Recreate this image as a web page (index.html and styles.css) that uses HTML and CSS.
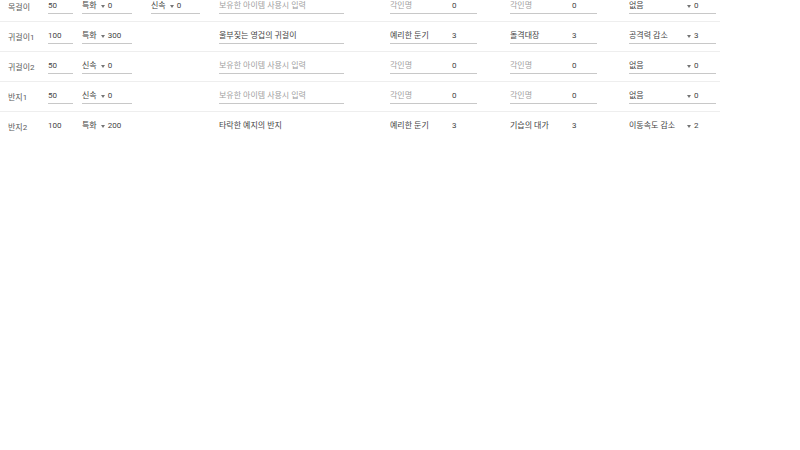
FILE: index.html
```html
<!DOCTYPE html>
<html lang="ko">
<head>
  <meta charset="UTF-8" />
  <title>장신구</title>
  <link rel="stylesheet" href="styles.css">
</head>
<body>
  <div class="list">
    <div class="row">
      <div class="label">목걸이</div>
      <div class="field qty">50</div>
      <div class="field sel"><span>특화</span><i class="arrow"></i><span>0</span></div>
      <div class="field sel sel2"><span>신속</span><i class="arrow"></i><span>0</span></div>
      <div class="field name ph">보유한 아이템 사용시 입력</div>
      <div class="field eng"><span class="en ph">각인명</span><span>0</span></div>
      <div class="field eng eng2"><span class="en ph">각인명</span><span>0</span></div>
      <div class="field pen"><span class="pn">없음</span><i class="arrow"></i><span>0</span></div>
    </div>
    <div class="row">
      <div class="label">귀걸이1</div>
      <div class="field qty">100</div>
      <div class="field sel"><span>특화</span><i class="arrow"></i><span>300</span></div>
      <div class="blank"></div>
      <div class="field name">울부짖는 영겁의 귀걸이</div>
      <div class="field eng"><span class="en">예리한 둔기</span><span>3</span></div>
      <div class="field eng eng2"><span class="en">돌격대장</span><span>3</span></div>
      <div class="field pen"><span class="pn">공격력 감소</span><i class="arrow"></i><span>3</span></div>
    </div>
    <div class="row">
      <div class="label">귀걸이2</div>
      <div class="field qty">50</div>
      <div class="field sel"><span>신속</span><i class="arrow"></i><span>0</span></div>
      <div class="blank"></div>
      <div class="field name ph">보유한 아이템 사용시 입력</div>
      <div class="field eng"><span class="en ph">각인명</span><span>0</span></div>
      <div class="field eng eng2"><span class="en ph">각인명</span><span>0</span></div>
      <div class="field pen"><span class="pn">없음</span><i class="arrow"></i><span>0</span></div>
    </div>
    <div class="row">
      <div class="label">반지1</div>
      <div class="field qty">50</div>
      <div class="field sel"><span>신속</span><i class="arrow"></i><span>0</span></div>
      <div class="blank"></div>
      <div class="field name ph">보유한 아이템 사용시 입력</div>
      <div class="field eng"><span class="en ph">각인명</span><span>0</span></div>
      <div class="field eng eng2"><span class="en ph">각인명</span><span>0</span></div>
      <div class="field pen"><span class="pn">없음</span><i class="arrow"></i><span>0</span></div>
    </div>
    <div class="row fixed">
      <div class="label">반지2</div>
      <div class="field qty">100</div>
      <div class="field sel"><span>특화</span><i class="arrow"></i><span>200</span></div>
      <div class="blank"></div>
      <div class="field name">타락한 예지의 반지</div>
      <div class="field eng"><span class="en">예리한 둔기</span><span>3</span></div>
      <div class="field eng eng2"><span class="en">기습의 대가</span><span>3</span></div>
      <div class="field pen"><span class="pn">이동속도 감소</span><i class="arrow"></i><span>2</span></div>
    </div>
  </div>
</body>
</html>
```

FILE: styles.css
```css
body {
  margin: 0;
  background: #ffffff;
  font-family: Roboto, "Noto Sans CJK KR", sans-serif;
  font-size: 8px;
  color: #444444;
}
.list {
  width: 720px;
  margin-top: -8px;
}
.row {
  display: flex;
  align-items: flex-start;
  height: 29px;
  border-bottom: 1px solid #eeeeee;
}
.row.fixed {
  border-bottom: none;
}
.label {
  width: 40px;
  padding-left: 8px;
  padding-top: 9px;
  line-height: 14px;
  color: #5a5a5a;
}
.field {
  display: flex;
  align-items: center;
  height: 14px;
  line-height: 14px;
  padding-top: 7px;
  border-bottom: 1px solid #c8c8c8;
  white-space: nowrap;
}
.fixed .field {
  border-bottom-color: transparent;
}
.ph {
  color: #a0a0a0;
}
.qty {
  width: 25px;
  margin-right: 9px;
}
.sel {
  width: 50px;
  margin-right: 19px;
}
.sel2 {
  width: 49px;
}
.blank {
  width: 49px;
  margin-right: 19px;
}
.arrow {
  display: inline-block;
  width: 0;
  height: 0;
  margin: 0 3px 0 4px;
  border-left: 2.5px solid transparent;
  border-right: 2.5px solid transparent;
  border-top: 3px solid #757575;
}
.name {
  width: 125px;
  margin-right: 46px;
}
.eng {
  width: 87px;
  margin-right: 33px;
}
.eng2 {
  margin-right: 32px;
}
.en {
  width: 62px;
}
.pen {
  width: 87px;
}
.pn {
  width: 54px;
}
```
